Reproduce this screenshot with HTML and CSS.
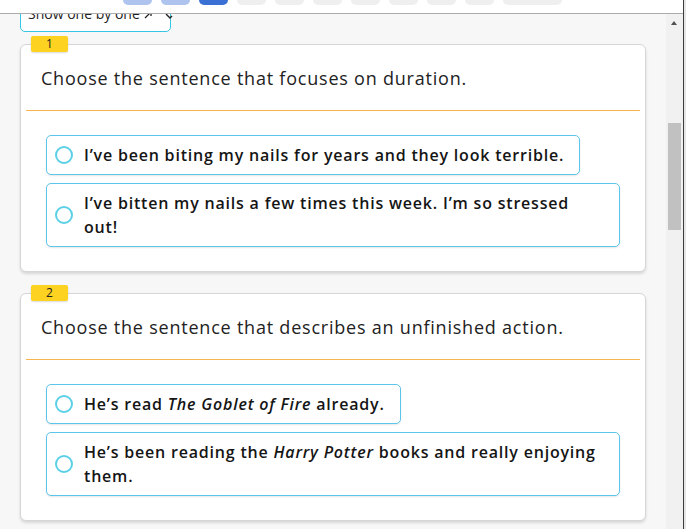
FILE: index.html
```html
<!DOCTYPE html>
<html lang="en">
<head>
<meta charset="utf-8">
<title>Quiz</title>
<link rel="stylesheet" href="styles.css">
</head>
<body>
<div class="app">
  <header class="topbar">
    <nav class="pager">
      <span class="page done"></span>
      <span class="page done"></span>
      <span class="page active"></span>
      <span class="page"></span>
      <span class="page"></span>
      <span class="page"></span>
      <span class="page"></span>
      <span class="page"></span>
      <span class="page"></span>
      <span class="page"></span>
      <span class="page wide"></span>
    </nav>
  </header>
  <div class="main">
    <div class="content">
      <button class="toggle">
        <span class="toggle-label">Show one by one</span>
        <svg class="ico-ext" width="8" height="8" viewBox="0 0 8 8"><path d="M1 7 L7 1 M3 1 H7 V5" fill="none" stroke="#222" stroke-width="1.3"/></svg>
        <svg class="ico-chev" width="10" height="10" viewBox="0 0 10 10"><path d="M2 3 L6 7 L8 5" fill="none" stroke="#222" stroke-width="1.4"/></svg>
      </button>

      <section class="card">
        <span class="badge">1</span>
        <h2 class="question">Choose the sentence that focuses on duration.</h2>
        <hr class="divider">
        <div class="options">
          <label class="option"><span class="radio"></span><span class="opt-text">I’ve been biting my nails for years and they look terrible.</span></label>
          <label class="option"><span class="radio"></span><span class="opt-text">I’ve bitten my nails a few times this week. I’m so stressed out!</span></label>
        </div>
      </section>

      <section class="card">
        <span class="badge">2</span>
        <h2 class="question">Choose the sentence that describes an unfinished action.</h2>
        <hr class="divider">
        <div class="options">
          <label class="option"><span class="radio"></span><span class="opt-text">He’s read <em>The Goblet of Fire</em> already.</span></label>
          <label class="option"><span class="radio"></span><span class="opt-text">He’s been reading the <em>Harry Potter</em> books and really enjoying them.</span></label>
        </div>
      </section>
    </div>
    <div class="scrollbar">
      <span class="sb-arrow"></span>
      <span class="sb-thumb"></span>
    </div>
  </div>
</div>
</body>
</html>
```
FILE: styles.css
```css
html, body {
  margin: 0;
  padding: 0;
  height: 100%;
  overflow: hidden;
}
body {
  background: #e6e6e6;
  font-family: "Open Sans", "Noto Sans", sans-serif;
  color: #1d1d1d;
}
.app {
  width: 683px;
  height: 529px;
  display: flex;
  flex-direction: column;
  border-right: 1px solid #3c3c3c;
}
.topbar {
  flex: none;
  height: 13px;
  background: #fff;
  border-bottom: 1px solid #ababab;
  overflow: hidden;
}
.pager {
  display: flex;
  gap: 9px;
  padding-left: 123px;
  margin-top: -25px;
}
.page {
  width: 29px;
  height: 30px;
  border-radius: 5px;
  background: #efefef;
}
.page.done { background: #aec4ee; }
.page.active { background: #3a6fd4; }
.page.wide { width: 59px; }

.main {
  flex: 1;
  display: flex;
  min-height: 0;
}
.content {
  flex: 1;
  min-width: 0;
  background: #f7f7f7;
  overflow: hidden;
  padding: 0 20px;
}
.toggle {
  display: flex;
  align-items: flex-start;
  box-sizing: border-box;
  width: 151px;
  height: 34px;
  margin-top: -16px;
  padding: 5px 0 0 7px;
  background: #fff;
  border: 1px solid #36c5e2;
  border-radius: 5px;
  font-family: "Open Sans", sans-serif;
  font-size: 14px;
  line-height: 20px;
  color: #222;
  white-space: nowrap;
}
.toggle-label { flex: none; }
.ico-ext { flex: none; margin: 7px 0 0 4px; }
.ico-chev { flex: none; margin: 7px 0 0 12px; }

.card {
  position: relative;
  margin-top: 12px;
  background: #fff;
  border: 1px solid #d6d6d6;
  border-radius: 6px;
  box-shadow: 0 2px 3px rgba(0, 0, 0, 0.13);
}
.card + .card { margin-top: 21px; }
.badge {
  position: absolute;
  top: -9px;
  left: 10px;
  width: 37px;
  height: 16px;
  background: #fed220;
  border-radius: 2px;
  box-shadow: 0 1px 2px rgba(0, 0, 0, 0.15);
  font-size: 12px;
  line-height: 16px;
  text-align: center;
  color: #222;
}
.question {
  margin: 0;
  padding: 21px 20px 20px;
  font-size: 18px;
  line-height: 24px;
  font-weight: 400;
  letter-spacing: 0.78px;
  color: #222;
}
.divider {
  height: 0;
  margin: 0 5px;
  border: 0;
  border-top: 1px solid #f7b550;
}
.options {
  display: flex;
  flex-direction: column;
  align-items: flex-start;
  gap: 8px;
  padding: 24px 25px 24px;
}
.option {
  display: flex;
  align-items: center;
  box-sizing: border-box;
  max-width: 100%;
  padding: 7px 15px 7px 8px;
  border: 1px solid #5cc6ea;
  border-radius: 5px;
  box-shadow: 0 1px 2px rgba(0, 0, 0, 0.1);
  background: #fff;
}
.radio {
  flex: none;
  box-sizing: border-box;
  width: 18px;
  height: 18px;
  margin-right: 11px;
  border: 2px solid #5cd0e6;
  border-radius: 50%;
}
.opt-text {
  font-size: 16px;
  line-height: 24px;
  font-weight: 600;
  letter-spacing: 0.8px;
  color: #151515;
}
.opt-text em { font-style: italic; }

.scrollbar {
  flex: none;
  width: 17px;
  display: flex;
  flex-direction: column;
  background: #f1f1f1;
}
.sb-arrow {
  width: 0;
  height: 0;
  margin: 7px 0 0 5px;
  border-left: 3.5px solid transparent;
  border-right: 3.5px solid transparent;
  border-bottom: 4px solid #505050;
}
.sb-thumb {
  width: 13px;
  height: 107px;
  margin: 98px 0 0 2px;
  background: #c1c1c1;
}
```
